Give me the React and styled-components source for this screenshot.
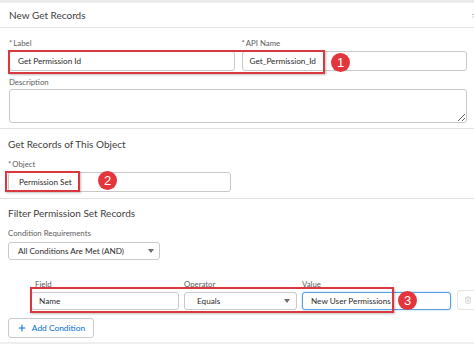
import React from 'react';
import styled, { createGlobalStyle } from 'styled-components';
import { Plus, Trash2 } from 'lucide-react';

const GlobalStyle = createGlobalStyle`
  html, body {
    margin: 0;
    padding: 0;
    background: #fff;
  }
  * {
    box-sizing: border-box;
  }
`;

const Page = styled.div`
  position: relative;
  width: 474px;
  height: 344px;
  overflow: hidden;
  background: #fff;
  font-family: Lato, 'Noto Sans', Arial, sans-serif;
  color: #3e3e3c;
  display: flex;
  flex-direction: column;
`;

const TopStrip = styled.div`
  height: 3px;
  background: #ececec;
`;

const Header = styled.div`
  height: 25px;
  display: flex;
  align-items: center;
  justify-content: space-between;
  padding-left: 9px;
  border-bottom: 1px solid #e2e2e2;
`;

const Title = styled.div`
  font-size: 10px;
  line-height: 16px;
  color: #3e3e3c;
`;

const Chevron = styled.span`
  font-size: 10px;
  color: #9a9a9a;
  margin-right: -3px;
`;

const Section = styled.div`
  padding: ${p => p.$pad};
  border-bottom: ${p => (p.$last ? 'none' : '1px solid #e2e2e2')};
`;

const FieldLabel = styled.div`
  font-size: 7.8px;
  line-height: 11px;
  color: #5c5c5c;
  padding-left: ${p => p.$pl || 0}px;
  margin-top: ${p => p.$mt || 0}px;
  margin-bottom: ${p => p.$mb || 2}px;
`;

const Star = styled.span`
  color: #6b6b6b;
  margin-right: 1px;
`;

const Row = styled.div`
  display: flex;
  gap: ${p => p.$gap || 7}px;
`;

const Field = styled.div`
  flex: ${p => (p.$w ? `0 0 ${p.$w}px` : '1')};
  display: flex;
  flex-direction: column;
`;

const Input = styled.div`
  height: ${p => p.$h || 20}px;
  width: ${p => (p.$w ? `${p.$w}px` : 'auto')};
  border: 1px solid ${p => (p.$focus ? '#5a9fd8' : '#c9c9c9')};
  box-shadow: ${p => (p.$focus ? '0 0 2px rgba(27,150,255,0.5)' : 'none')};
  border-radius: 3px;
  background: #fff;
  display: flex;
  align-items: center;
  justify-content: space-between;
  padding: 0 ${p => p.$pr || 8}px 0 ${p => p.$pl || 8}px;
  font-size: 8.2px;
  color: #2b2b2b;
  white-space: nowrap;
`;

const Caret = styled.span`
  display: inline-block;
  width: 1px;
  height: 10px;
  background: #222;
  vertical-align: middle;
  margin-left: 1px;
`;

const Arrow = styled.span`
  width: 0;
  height: 0;
  border-left: 3.5px solid transparent;
  border-right: 3.5px solid transparent;
  border-top: 4px solid #706e6b;
`;

const TextArea = styled.textarea`
  display: block;
  width: 100%;
  height: 34px;
  border: 1px solid #c9c9c9;
  border-radius: 3px;
  resize: vertical;
  font-family: inherit;
  outline: none;
`;

const Conditions = styled.div`
  margin-top: 19px;
  padding-left: 23px;
  display: flex;
  gap: 5px;
  align-items: flex-end;
`;

const TrashButton = styled.div`
  flex: 0 0 20px;
  height: 20px;
  margin-left: 1px;
  border: 1px solid #e5e5e5;
  border-right: none;
  border-radius: 3px 0 0 3px;
  display: flex;
  align-items: center;
  justify-content: center;
  color: #c9c9c9;
`;

const AddButton = styled.div`
  margin-top: 8px;
  width: 86px;
  height: 20px;
  border: 1px solid #c9c9c9;
  border-radius: 3px;
  display: flex;
  align-items: center;
  justify-content: center;
  gap: 5px;
  font-size: 8.4px;
  color: #0070d2;
`;

const BottomStrip = styled.div`
  flex: 1;
  margin-top: 4px;
  background: #eeeeee;
`;

const RedBox = styled.div`
  position: absolute;
  left: ${p => p.$x}px;
  top: ${p => p.$y}px;
  width: ${p => p.$w}px;
  height: ${p => p.$h}px;
  border: 2px solid #d9383f;
  box-shadow: 1px 1px 2px rgba(0, 0, 0, 0.25);
  pointer-events: none;
`;

const Badge = styled.div`
  position: absolute;
  left: ${p => p.$x - 10}px;
  top: ${p => p.$y - 10}px;
  width: 19px;
  height: 19px;
  border-radius: 50%;
  background: #e2353c;
  color: #fff;
  font-family: 'Liberation Sans', Arial, sans-serif;
  font-size: 13px;
  line-height: 19px;
  text-align: center;
`;

export default function App() {
  return (
    <>
      <GlobalStyle />
      <Page>
        <TopStrip />
        <Header>
          <Title>New Get Records</Title>
          <Chevron>&gt;</Chevron>
        </Header>

        <Section $pad="10px 7px 5px 9px">
          <Row $gap={7}>
            <Field>
              <FieldLabel><Star>*</Star>Label</FieldLabel>
              <Input>Get Permission Id</Input>
            </Field>
            <Field>
              <FieldLabel><Star>*</Star>API Name</FieldLabel>
              <Input $pl={7}>Get_Permission_Id</Input>
            </Field>
          </Row>
          <FieldLabel $mt={6} $mb={1}>Description</FieldLabel>
          <TextArea readOnly value="" />
        </Section>

        <Section $pad="7px 7px 6px 8px">
          <Title>Get Records of This Object</Title>
          <FieldLabel $mt={7}><Star>*</Star>Object</FieldLabel>
          <Input $w={223} $pl={10}>Permission Set</Input>
        </Section>

        <Section $pad="6px 7px 0 8px" $last>
          <Title>Filter Permission Set Records</Title>
          <FieldLabel $mt={7} $mb={3}>Condition Requirements</FieldLabel>
          <Input $w={152} $h={18} $pl={9} $pr={5}>
            All Conditions Are Met (AND)
            <Arrow />
          </Input>

          <Conditions>
            <Field $w={148}>
              <FieldLabel $mb={2} $pl={4}>Field</FieldLabel>
              <Input $h={18} $pl={7}>Name</Input>
            </Field>
            <Field $w={113}>
              <FieldLabel $mb={2}>Operator</FieldLabel>
              <Input $h={18} $pl={12} $pr={6}>
                Equals
                <Arrow />
              </Input>
            </Field>
            <Field $w={149}>
              <FieldLabel $mb={2}>Value</FieldLabel>
              <Input $h={18} $focus>
                <span>New User Permissions<Caret /></span>
              </Input>
            </Field>
            <TrashButton>
              <Trash2 size={8} strokeWidth={2} />
            </TrashButton>
          </Conditions>

          <AddButton>
            <Plus size={10} strokeWidth={2.5} />
            Add Condition
          </AddButton>
        </Section>
        <BottomStrip />

        <RedBox $x={8} $y={50} $w={317} $h={24} />
        <Badge $x={341} $y={63}>1</Badge>
        <RedBox $x={5} $y={171} $w={75} $h={21} />
        <Badge $x={108} $y={181}>2</Badge>
        <RedBox $x={30} $y={287} $w={364} $h={26} />
        <Badge $x={408} $y={301}>3</Badge>
      </Page>
    </>
  );
}
